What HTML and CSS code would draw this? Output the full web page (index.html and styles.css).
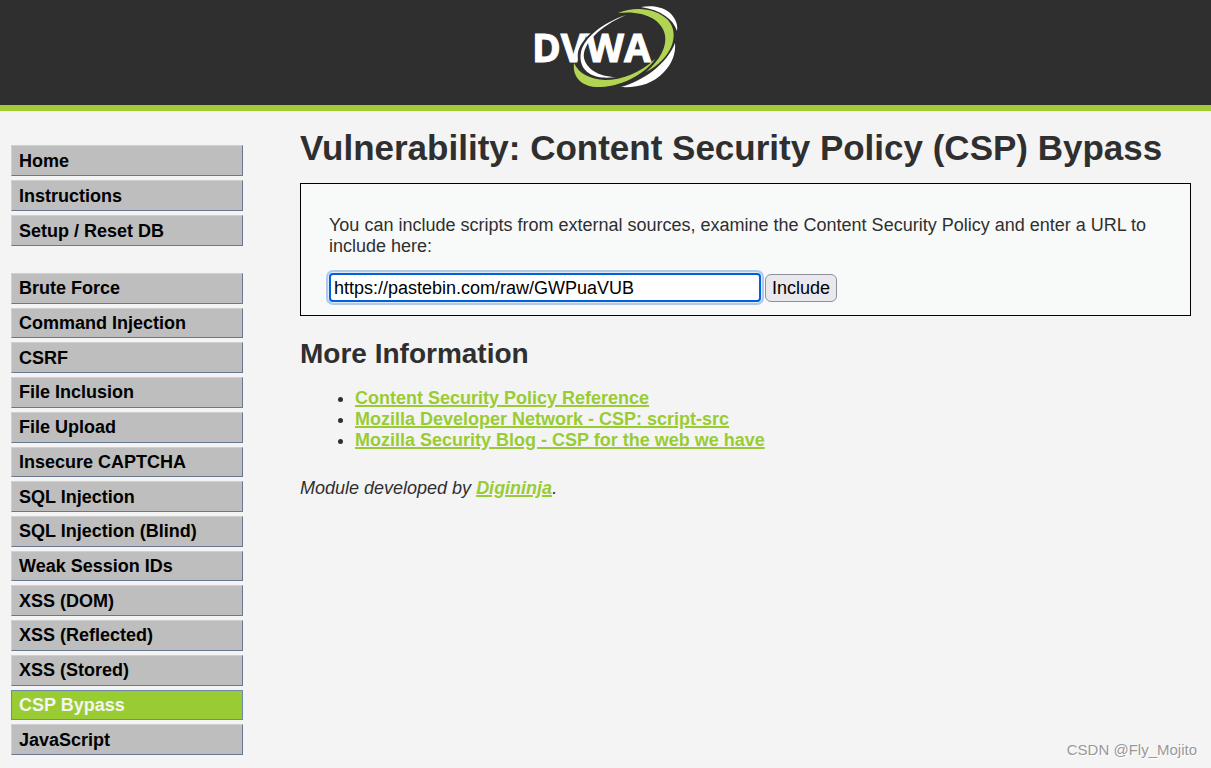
FILE: index.html
```html
<!DOCTYPE html>
<html lang="en">
<head>
  <meta charset="UTF-8">
  <meta name="viewport" content="width=device-width, initial-scale=1.0">
  <title>Vulnerability: Content Security Policy (CSP) Bypass</title>
  <link rel="stylesheet" href="styles.css">
</head>
<body>
  <header class="header">
    <svg class="logo" viewBox="0 0 144 82" role="img" aria-label="DVWA">
      <text class="logo-text" x="-2" y="56">DVWA</text>
      <path fill="#2f2f2f" d="M92 8C68 15 48 31 44 46C42 60 51 71 60 72L57 66C49 60 47 52 48 46C52 32 70 18 92 8Z"/>
      <path fill="#fff" d="M92 9C68 17 50 32 47 46C44 61 54 75 82 71C64 71 52 62 50 52C48 38 66 20 92 9Z"/>
      <path fill="#b1d553" d="M84 7C101 0 122 2 134 14C147 29 137 53 112 66C126 54 133 41 131 29C128 13 109 4 84 7Z"/>
      <path fill="#fff" d="M107 1C119 -1 131 1 138 9C142 14 144 19 143 25C139 13 127 4 107 1Z"/>
      <path fill="#fff" d="M141 37C142 47 138 58 130 66C119 78 103 82 87 81C109 75 133 58 141 37Z"/>
      <path fill="#b1d553" d="M40 57C38 73 50 82 67 81C90 80 113 66 121 53C106 67 88 74 71 74C56 73 45 68 40 57Z"/>
    </svg>
  </header>

  <div class="page">
    <nav class="menu">
      <ul class="menu-group menu-main">
        <li><a href="#">Home</a></li>
        <li><a href="#">Instructions</a></li>
        <li><a href="#">Setup / Reset DB</a></li>
      </ul>
      <ul class="menu-group menu-vulns">
        <li><a href="#">Brute Force</a></li>
        <li><a href="#">Command Injection</a></li>
        <li><a href="#">CSRF</a></li>
        <li><a href="#">File Inclusion</a></li>
        <li><a href="#">File Upload</a></li>
        <li><a href="#">Insecure CAPTCHA</a></li>
        <li><a href="#">SQL Injection</a></li>
        <li><a href="#">SQL Injection (Blind)</a></li>
        <li><a href="#">Weak Session IDs</a></li>
        <li><a href="#">XSS (DOM)</a></li>
        <li><a href="#">XSS (Reflected)</a></li>
        <li><a href="#">XSS (Stored)</a></li>
        <li class="selected"><a href="#">CSP Bypass</a></li>
        <li><a href="#">JavaScript</a></li>
      </ul>
    </nav>

    <main class="content">
      <h1>Vulnerability: Content Security Policy (CSP) Bypass</h1>

      <form class="vulnerable-area" onsubmit="return false">
        <label for="include">You can include scripts from external sources, examine the Content Security Policy and enter a URL to include here:</label>
        <div class="form-row">
          <input type="text" id="include" name="include" value="https://pastebin.com/raw/GWPuaVUB">
          <button type="submit">Include</button>
        </div>
      </form>

      <h2>More Information</h2>
      <ul class="links">
        <li><a href="#">Content Security Policy Reference</a></li>
        <li><a href="#">Mozilla Developer Network - CSP: script-src</a></li>
        <li><a href="#">Mozilla Security Blog - CSP for the web we have</a></li>
      </ul>
      <p class="credit">Module developed by <a href="#">Digininja</a>.</p>
    </main>
  </div>

  <div class="watermark">CSDN @Fly_Mojito</div>
</body>
</html>
```
FILE: styles.css
```css
* {
  box-sizing: border-box;
}

body {
  margin: 0;
  background-color: #f4f4f4;
  color: #2f2f2f;
  font-family: "Liberation Sans", Arial, sans-serif;
  font-size: 18px;
  line-height: 21px;
}

.header {
  display: flex;
  justify-content: center;
  padding: 6px 0 17px;
  background-color: #2f2f2f;
  border-bottom: 6px solid #a1cc33;
}

.logo {
  width: 144px;
  height: 82px;
  overflow: visible;
}

.logo-text {
  fill: #fff;
  stroke: #fff;
  stroke-width: 1px;
  font-family: "Open Sans", sans-serif;
  font-size: 39px;
  font-weight: bold;
}

.page {
  display: flex;
  align-items: flex-start;
  gap: 57px;
  padding: 0 20px 13px 11px;
}

/* Left menu */
.menu {
  display: flex;
  flex-direction: column;
  flex: 0 0 232px;
  gap: 27px;
  padding-top: 34px;
}

.menu-group {
  display: grid;
  gap: 4px;
  margin: 0;
  padding: 0;
  list-style: none;
}

.menu-main {
  min-height: 101px;
}

.menu-vulns {
  min-height: 482px;
}

.menu-group li {
  display: flex;
  align-items: center;
  padding: 1px 7px 0;
  background-color: #bebebe;
  border: 1px solid #d0d0d0;
  border-right-color: #68788f;
  border-bottom-color: #68788f;
}

.menu-group a {
  flex: 1;
  color: #000;
  font-weight: bold;
  text-decoration: none;
}

.menu-group .selected {
  background-color: #9c3;
  border-color: #7088a8;
}

.menu-group .selected a {
  color: #f4f4f4;
}

/* Main content */
.content {
  flex: 1;
  min-width: 0;
}

h1 {
  margin: 16px 0 14px;
  font-size: 35px;
  line-height: 42px;
}

h2 {
  margin: 22px 0 18px;
  font-size: 28px;
  line-height: 32px;
}

.vulnerable-area {
  padding: 31px 28px 13px;
  background-color: #f8faf9;
  border: 1px solid #000;
}

.vulnerable-area label {
  display: block;
}

.form-row {
  display: flex;
  align-items: center;
  gap: 4px;
  margin-top: 16px;
}

.form-row input {
  width: 432px;
  height: 29px;
  padding: 1px 3px 0;
  background-color: #fff;
  border: 2px solid #0061e0;
  border-radius: 4px;
  box-shadow: 0 0 0 1px #e0e9f6, 0 0 0 3px #b0c8ec;
  color: #000;
  font: inherit;
}

.form-row button {
  height: 28px;
  padding: 1px 6px 0;
  background-color: #e9e9ed;
  border: 1px solid #8f8f9d;
  border-radius: 6px;
  color: #000;
  font: inherit;
}

.links {
  margin: 0;
  padding-left: 55px;
}

.content a {
  color: #9c3;
  font-weight: bold;
  text-decoration: underline 2px;
}

.credit {
  margin: 27px 0 0;
  font-style: italic;
}

.watermark {
  position: absolute;
  right: 14px;
  bottom: 8px;
  color: #999;
  font-size: 15px;
  line-height: 20px;
  text-shadow: 1px 1px 0 #fff;
}
```
